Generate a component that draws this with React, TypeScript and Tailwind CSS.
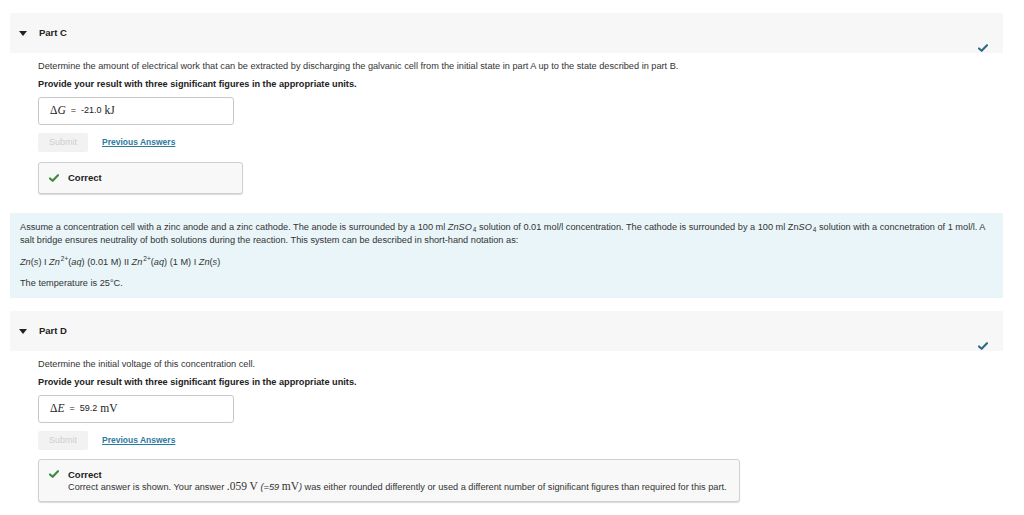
import React from 'react';

const sans = { fontFamily: '"Liberation Sans", Arial, sans-serif' };

const Check = ({ className }: { className: string }) => (
  <svg viewBox="0 0 12 10" className={className}>
    <path d="M1 5.5 L4.3 8.5 L11 1.5" fill="none" stroke="currentColor" strokeWidth="2.6" strokeLinecap="round" strokeLinejoin="round" />
  </svg>
);

const Header = ({ title }: { title: string }) => (
  <div className="relative h-[40px] bg-[#f7f7f7] flex items-center">
    <span className="ml-[9px] w-0 h-0 border-l-[4px] border-r-[4px] border-t-[5px] border-l-transparent border-r-transparent border-t-[#222]" />
    <span className="ml-[12px] text-[9.5px] font-bold text-[#222]">{title}</span>
    <Check className="absolute right-[15px] bottom-[1px] w-[10px] h-[8px] text-[#2d6a87]" />
  </div>
);

const Math = ({ children }: { children: React.ReactNode }) => (
  <span className="font-['Liberation_Serif',serif] text-[11.5px]">{children}</span>
);

const Sub = ({ children }: { children: React.ReactNode }) => (
  <span className="relative top-[2px] ml-[1px] text-[6.5px] leading-none">{children}</span>
);

const Sup = ({ children }: { children: React.ReactNode }) => (
  <span className="relative -top-[4px] ml-[1px] text-[6.5px] leading-none">{children}</span>
);

const Buttons = () => (
  <div className="flex items-center mt-[8px]">
    <div className="w-[50px] h-[19px] bg-[#f2f2f2] rounded-[2px] flex items-center justify-center text-[9px] text-[#cfcfcf]">Submit</div>
    <a className="ml-[14px] text-[8.5px] font-bold text-[#2d7aa0] underline">Previous Answers</a>
  </div>
);

export default function App() {
  return (
    <div className="bg-white w-[1024px] h-[515px] overflow-hidden text-[#333]" style={sans}>
      <div className="pt-[13px] pl-[10px] pr-[21px]">
        <Header title="Part C" />
        <div className="pl-[28px]">
          <p className="mt-[8px] text-[9.2px] leading-[11px] text-[#333]">
            Determine the amount of electrical work that can be extracted by discharging the galvanic cell from the initial state in part A up to the state described in part B.
          </p>
          <p className="mt-[7px] text-[9.2px] leading-[11px] font-bold text-[#222]">
            Provide your result with three significant figures in the appropriate units.
          </p>
          <div className="mt-[7px] w-[196px] h-[28px] border border-[#c8c8c8] rounded-[3px] flex items-center pl-[11px] text-[9px] text-[#222]">
            <Math>Δ<i>G</i></Math>
            <span className="mx-[5px]">=</span>
            <span>-21.0</span>
            <span className="ml-[3px]"><Math>kJ</Math></span>
          </div>
          <Buttons />
          <div className="mt-[10px] w-[205px] h-[32px] bg-[#f8f8f8] border border-[#d0d0d0] rounded-[3px] shadow-[0_1px_1px_rgba(0,0,0,0.15)] flex items-center pl-[10px]">
            <Check className="w-[10px] h-[8px] text-[#3a8a3a]" />
            <span className="ml-[9px] text-[9.5px] font-bold text-[#222]">Correct</span>
          </div>
        </div>

        <div className="mt-[19px] h-[85px] bg-[#e9f5f8] px-[10px] pt-[8px] text-[9.2px] leading-[13px] text-[#333]">
          <p>
            Assume a concentration cell with a zinc anode and a zinc cathode. The anode is surrounded by a 100 ml <i>ZnSO</i><Sub>4</Sub> solution of 0.01 mol/l concentration. The cathode is surrounded by a 100 ml Zn<i>SO</i><Sub>4</Sub> solution with a concnetration of 1 mol/l. A salt bridge ensures neutrality of both solutions during the reaction. This system can be described in short-hand notation as:
          </p>
          <p className="mt-[9px]">
            <i>Zn</i>(<i>s</i>) I <i>Zn</i><Sup>2+</Sup>(<i>aq</i>) (0.01 M) II <i>Zn</i><Sup>2+</Sup>(<i>aq</i>) (1 M) I <i>Zn</i>(<i>s</i>)
          </p>
          <p className="mt-[8px]">The temperature is 25°C.</p>
        </div>

        <div className="mt-[13px]">
          <Header title="Part D" />
        </div>
        <div className="pl-[28px]">
          <p className="mt-[8px] text-[9.2px] leading-[11px] text-[#333]">Determine the initial voltage of this concentration cell.</p>
          <p className="mt-[7px] text-[9.2px] leading-[11px] font-bold text-[#222]">
            Provide your result with three significant figures in the appropriate units.
          </p>
          <div className="mt-[7px] w-[196px] h-[28px] border border-[#c8c8c8] rounded-[3px] flex items-center pl-[11px] text-[9px] text-[#222]">
            <Math>Δ<i>E</i></Math>
            <span className="mx-[5px]">=</span>
            <span>59.2</span>
            <span className="ml-[3px]"><Math>mV</Math></span>
          </div>
          <Buttons />
          <div className="mt-[9px] w-[702px] h-[43px] bg-[#f8f8f8] border border-[#d0d0d0] rounded-[3px] shadow-[0_1px_1px_rgba(0,0,0,0.15)] flex items-start pl-[10px] pt-[9px]">
            <Check className="mt-[1px] w-[10px] h-[8px] text-[#3a8a3a]" />
            <div className="ml-[9px]">
              <div className="text-[9.5px] leading-[11px] font-bold text-[#222]">Correct</div>
              <div className="text-[9.2px] leading-[12px] text-[#333] whitespace-nowrap">
                Correct answer is shown. Your answer <Math>.059 V</Math> <i>(=59 </i><Math>mV</Math><i>)</i> was either rounded differently or used a different number of significant figures than required for this part.
              </div>
            </div>
          </div>
        </div>
      </div>
    </div>
  );
}
